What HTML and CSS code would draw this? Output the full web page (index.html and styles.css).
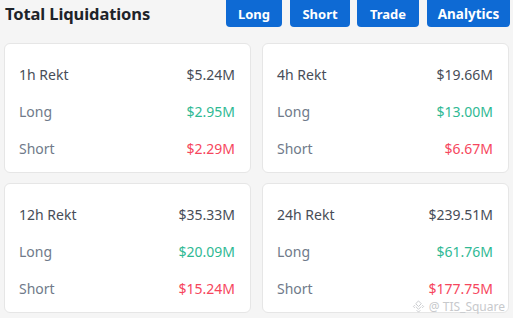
FILE: index.html
```html
<!DOCTYPE html>
<html>
<head>
<meta charset="utf-8">
<link rel="stylesheet" href="styles.css">
</head>
<body>
<div class="page">
  <div class="header">
    <h1 class="title">Total Liquidations</h1>
    <div class="actions">
      <button class="btn btn-long">Long</button>
      <button class="btn btn-short">Short</button>
      <button class="btn btn-trade">Trade</button>
      <button class="btn btn-analytics">Analytics</button>
    </div>
  </div>
  <div class="grid">
    <div class="card">
      <div class="row head"><span>1h Rekt</span><span>$5.24M</span></div>
      <div class="row"><span>Long</span><span class="up">$2.95M</span></div>
      <div class="row"><span>Short</span><span class="down">$2.29M</span></div>
    </div>
    <div class="card">
      <div class="row head"><span>4h Rekt</span><span>$19.66M</span></div>
      <div class="row"><span>Long</span><span class="up">$13.00M</span></div>
      <div class="row"><span>Short</span><span class="down">$6.67M</span></div>
    </div>
    <div class="card">
      <div class="row head"><span>12h Rekt</span><span>$35.33M</span></div>
      <div class="row"><span>Long</span><span class="up">$20.09M</span></div>
      <div class="row"><span>Short</span><span class="down">$15.24M</span></div>
    </div>
    <div class="card">
      <div class="row head"><span>24h Rekt</span><span>$239.51M</span></div>
      <div class="row"><span>Long</span><span class="up">$61.76M</span></div>
      <div class="row"><span>Short</span><span class="down">$177.75M</span></div>
    </div>
  </div>
  <div class="watermark">
    <svg class="wm-logo" width="13" height="13" viewBox="0 0 14 14" fill="none" stroke="currentColor" stroke-width="1">
      <path d="M7 1 L10 4 L7 7 L4 4 Z"/>
      <path d="M4 7 L7 10 L10 7"/>
      <path d="M1.5 7 L3 5.5 M1.5 7 L3 8.5 M12.5 7 L11 5.5 M12.5 7 L11 8.5"/>
      <path d="M7 13 L5 11 M7 13 L9 11"/>
    </svg>
    <span class="wm-text">@ TIS_Square</span>
  </div>
</div>
</body>
</html>
```
FILE: styles.css
```css
* { box-sizing: border-box; }
html, body {
  margin: 0;
  padding: 0;
  background: #f5f5f5;
}
body {
  font-family: "Noto Sans", "Open Sans", sans-serif;
  color: #474d57;
  width: 513px;
  height: 318px;
  overflow: hidden;
}
.page {
  position: relative;
  height: 318px;
  padding: 0 4px 0 4px;
}
.header {
  display: flex;
  justify-content: space-between;
  align-items: flex-start;
  height: 43px;
}
.title {
  margin: 0 0 0 1px;
  font-size: 16.5px;
  font-weight: 700;
  color: #1e2329;
  line-height: 28px;
  letter-spacing: -0.1px;
}
.actions {
  display: flex;
  gap: 8px;
  margin-top: -3px;
  margin-right: -1px;
}
.btn {
  border: 0;
  background: #0e6ad4;
  color: #ffffff;
  font-family: "Noto Sans", "Open Sans", sans-serif;
  font-weight: 700;
  font-size: 13px;
  height: 30px;
  padding: 3px 0 0;
  border-radius: 4px;
  text-align: center;
}
.btn-long { width: 56px; }
.btn-short { width: 60px; margin-right: -1px; }
.btn-trade { width: 62px; }
.btn-analytics { width: 83px; font-size: 13.5px; }
.grid {
  display: grid;
  grid-template-columns: 1fr 1fr;
  column-gap: 11px;
  row-gap: 10px;
}
.card {
  background: #ffffff;
  border: 1px solid #e6e6e6;
  border-radius: 6px;
  height: 130px;
  padding: 12px 15px 6px 14px;
}
.row {
  display: flex;
  justify-content: space-between;
  align-items: center;
  height: 37px;
  font-size: 14px;
  line-height: 15px;
  color: #707a8a;
}
.row.head {
  color: #474d57;
  font-weight: 400;
}
.row .up { color: #2fb994; }
.row .down { color: #f6465d; }
.watermark {
  position: absolute;
  right: 8px;
  bottom: 5px;
  display: flex;
  align-items: center;
  gap: 4px;
  color: #c7c9cc;
  font-size: 12px;
  line-height: 12px;
}
.wm-text { color: #c7c9cc; }
```
